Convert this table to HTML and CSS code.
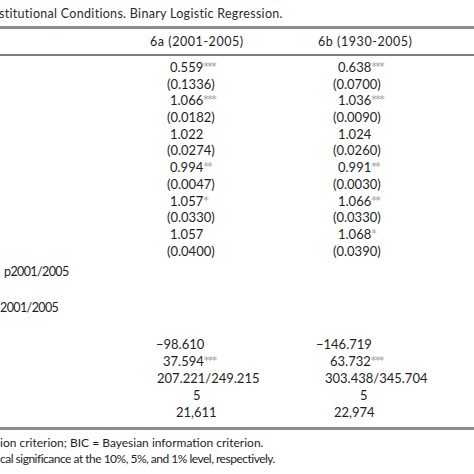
FILE: index.html
```html
<!DOCTYPE html>
<html>
<head>
<meta charset="utf-8">
<link rel="stylesheet" href="styles.css">
</head>
<body>
<div class="title">stitutional Conditions. Binary Logistic Regression.</div>
<div class="line line-top"></div>
<div class="row head">
  <div class="lab"></div>
  <div class="c1">6a (2001-2005)</div>
  <div class="c2">6b (1930-2005)</div>
</div>
<div class="line line-mid"></div>
<div class="tbody">
  <div class="row"><div class="lab"></div><div class="c1 co">0.559<sup>***</sup></div><div class="c2 co">0.638<sup>***</sup></div></div>
  <div class="row"><div class="lab"></div><div class="c1 se">(0.1336)</div><div class="c2 se">(0.0700)</div></div>
  <div class="row"><div class="lab"></div><div class="c1 co">1.066<sup>***</sup></div><div class="c2 co">1.036<sup>***</sup></div></div>
  <div class="row"><div class="lab"></div><div class="c1 se">(0.0182)</div><div class="c2 se">(0.0090)</div></div>
  <div class="row"><div class="lab"></div><div class="c1 co">1.022</div><div class="c2 co">1.024</div></div>
  <div class="row"><div class="lab"></div><div class="c1 se">(0.0274)</div><div class="c2 se">(0.0260)</div></div>
  <div class="row"><div class="lab"></div><div class="c1 co">0.994<sup>**</sup></div><div class="c2 co">0.991<sup>**</sup></div></div>
  <div class="row"><div class="lab"></div><div class="c1 se">(0.0047)</div><div class="c2 se">(0.0030)</div></div>
  <div class="row"><div class="lab"></div><div class="c1 co">1.057<sup>*</sup></div><div class="c2 co">1.066<sup>**</sup></div></div>
  <div class="row"><div class="lab"></div><div class="c1 se">(0.0330)</div><div class="c2 se">(0.0330)</div></div>
  <div class="row"><div class="lab"></div><div class="c1 co">1.057</div><div class="c2 co">1.068<sup>*</sup></div></div>
  <div class="row"><div class="lab"></div><div class="c1 se">(0.0400)</div><div class="c2 se">(0.0390)</div></div>
  <div class="row lbl1"><div class="lab indent">p2001/2005</div><div class="c1"></div><div class="c2"></div></div>
  <div class="row lbl2"><div class="lab">2001/2005</div><div class="c1"></div><div class="c2"></div></div>
  <div class="stats">
    <div class="row"><div class="lab"></div><div class="c1 ll1">−98.610</div><div class="c2 ll2">−146.719</div></div>
    <div class="row"><div class="lab"></div><div class="c1 ch1">37.594<sup>***</sup></div><div class="c2 ch2">63.732<sup>***</sup></div></div>
    <div class="row"><div class="lab"></div><div class="c1 ic">207.221/249.215</div><div class="c2 ic">303.438/345.704</div></div>
    <div class="row"><div class="lab"></div><div class="c1 df">5</div><div class="c2 df">5</div></div>
    <div class="row"><div class="lab"></div><div class="c1 n1">21,611</div><div class="c2 n2">22,974</div></div>
  </div>
</div>
<div class="line line-bot"></div>
<div class="notes">
  <div class="n-a">ion criterion; BIC = Bayesian information criterion.</div>
  <div class="n-b">cal significance at the 10%, 5%, and 1% level, respectively.</div>
</div>
</body>
</html>
```
FILE: styles.css
```css
html, body {
  margin: 0;
  padding: 0;
  background: #fff;
}
body {
  font-family: "Lato", sans-serif;
  font-size: 13px;
  color: #1e1e1e;
}
.title {
  font-size: 12.5px;
  letter-spacing: 0.3px;
  height: 26px;
  line-height: 28px;
  white-space: nowrap;
  margin-left: -1px;
  color: #2a2a2a;
}
.line {
  height: 3px;
  background: #8c8c8c;
}
.line-mid {
  height: 2px;
  background: #7a7a7a;
}
.row {
  display: grid;
  grid-template-columns: 150px 168px 1fr;
  height: 16.7px;
  line-height: 16.7px;
  white-space: nowrap;
}
.row.head {
  font-size: 12.5px;
  letter-spacing: 0.55px;
  height: 25px;
  line-height: 25px;
}
.tbody {
  padding-top: 3px;
  padding-bottom: 6px;
}
.lab {
  font-size: 12.5px;
  letter-spacing: -0.6px;
}
.lab.indent { padding-left: 4px; }
.lbl1 { margin-top: 5px; }
.lbl2 { margin-top: 19px; }
.stats { margin-top: 19px; }
.stats .row { height: 17px; line-height: 17px; }
sup {
  font-family: "DejaVu Sans", sans-serif;
  color: #a0a0a0;
  font-size: 11px;
  vertical-align: 0;
  position: relative;
  top: -2px;
  letter-spacing: -1.5px;
}
.c1.co { padding-left: 20px; }
.c2.co { padding-left: 20px; }
.c1.se { padding-left: 17px; }
.c2.se { padding-left: 15px; }
.ll1 { padding-left: 6px; }
.ll2 { margin-left: -2px; }
.ch1 { padding-left: 13px; }
.ch2 { padding-left: 12px; }
.ic { padding-left: 7px; }
.df { padding-left: 43px; }
.c2.df { padding-left: 42px; }
.n1 { padding-left: 26px; }
.n2 { padding-left: 16px; }
.notes {
  padding-top: 5px;
  font-size: 12px;
  line-height: 16.5px;
  white-space: nowrap;
}
.n-b { letter-spacing: -0.5px; }
```
